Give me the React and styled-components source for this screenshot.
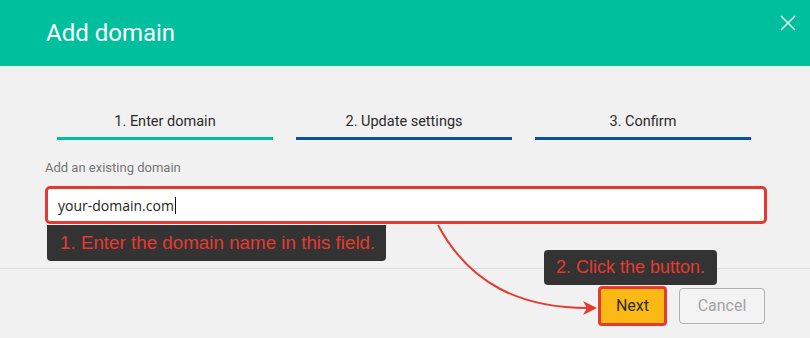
import React from "react";
import styled, { createGlobalStyle } from "styled-components";

const GlobalStyle = createGlobalStyle`
    html, body {
        margin: 0;
        padding: 0;
        background: #f1f1f1;
    }
`;

const RED = "#e43a2f";

const Modal = styled.div`
    position: relative;
    width: 810px;
    height: 338px;
    background: #f1f1f1;
    overflow: hidden;
    font-family: Roboto, "Liberation Sans", sans-serif;
`;

const Header = styled.header`
    height: 66px;
    background: #00bf9c;
    display: flex;
    align-items: center;
    justify-content: space-between;
    padding: 0 14px 0 46px;
    box-sizing: border-box;
`;

const Title = styled.h1`
    margin: 0 0 1px;
    font-size: 24px;
    font-weight: 400;
    color: #fff;
`;

const CloseButton = styled.button`
    align-self: flex-start;
    margin-top: 15px;
    width: 16px;
    height: 16px;
    padding: 0;
    border: 0;
    background: none;
    cursor: pointer;
    display: flex;
`;

const Body = styled.div`
    position: relative;
    padding: 46px 43px 44px 45px;
`;

const Steps = styled.div`
    display: grid;
    grid-template-columns: repeat(3, 1fr);
    gap: 23px;
    margin: 0 16px 0 12px;
`;

const Step = styled.div`
    text-align: center;
    font-size: 14.5px;
    line-height: 20px;
    color: #2b2b2b;
    padding-bottom: 5px;
    border-bottom: 3px solid ${p => (p.$active ? "#00bf9c" : "#0d4f9f")};
`;

const FieldLabel = styled.label`
    display: block;
    margin-top: 19px;
    font-size: 13px;
    line-height: 18px;
    color: #767676;
`;

const InputWrap = styled.div`
    position: relative;
    margin-top: 9px;
`;

const Input = styled.div`
    height: 38px;
    box-sizing: border-box;
    border: 3px solid ${RED};
    border-radius: 5px;
    background: #fff;
    display: flex;
    align-items: center;
    padding-left: 10px;
    font-family: "Open Sans", sans-serif;
    font-size: 14px;
    color: #1e1e1e;
`;

const Caret = styled.span`
    display: inline-block;
    width: 1px;
    height: 17px;
    background: #111;
    margin-left: 1px;
`;

const Hint = styled.div`
    position: absolute;
    background: #333;
    color: ${RED};
    font-family: "Liberation Sans", Arial, sans-serif;
    font-size: ${p => p.$size || 18}px;
    white-space: nowrap;
    display: flex;
    align-items: center;
    box-sizing: border-box;
`;

const FieldHint = styled(Hint)`
    left: 2px;
    top: 100%;
    margin-top: 1px;
    width: 339px;
    height: 36px;
    padding-left: 13px;
    border-radius: 0 0 4px 4px;
`;

const ButtonHint = styled(Hint)`
    left: 544px;
    top: 250px;
    width: 173px;
    height: 35px;
    padding-left: 12px;
    border-radius: 4px;
`;

const Footer = styled.footer`
    border-top: 1px solid #dedbe4;
    height: 70px;
    box-sizing: border-box;
    display: flex;
    justify-content: flex-end;
    align-items: center;
    gap: 12px;
    padding: 0 45px 0 0;
`;

const Button = styled.button`
    font-family: Roboto, "Liberation Sans", sans-serif;
    font-size: 16px;
    border-radius: 4px;
    box-sizing: border-box;
    cursor: pointer;
    padding: 0;
    margin-top: 4px;
`;

const NextButton = styled(Button)`
    width: 69px;
    height: 40px;
    background: #fdb913;
    border: 3px solid ${RED};
    color: #2d2d2d;
`;

const CancelButton = styled(Button)`
    width: 86px;
    height: 36px;
    background: #f3f3f3;
    border: 1px solid #b0b0b0;
    color: #a3a3a3;
`;

const ArrowLayer = styled.svg`
    position: absolute;
    left: 0;
    top: 0;
    pointer-events: none;
`;

const App = () => (
    <>
        <GlobalStyle/>
        <Modal>
            <Header>
                <Title>Add domain</Title>
                <CloseButton aria-label="Close">
                    <svg width="16" height="16" viewBox="0 0 16 16">
                        <path d="M1 1 L15 15 M15 1 L1 15" stroke="#fff" strokeWidth="1.4"/>
                    </svg>
                </CloseButton>
            </Header>
            <Body>
                <Steps>
                    <Step $active>1. Enter domain</Step>
                    <Step>2. Update settings</Step>
                    <Step>3. Confirm</Step>
                </Steps>
                <FieldLabel>Add an existing domain</FieldLabel>
                <InputWrap>
                    <Input>your-domain.com<Caret/></Input>
                    <FieldHint $size={18.8}>1. Enter the domain name in this field.</FieldHint>
                </InputWrap>
            </Body>
            <Footer>
                <NextButton>Next</NextButton>
                <CancelButton>Cancel</CancelButton>
            </Footer>
            <ArrowLayer width="810" height="338" viewBox="0 0 810 338">
                <path d="M438 225 C470 285 522 308 588 308" fill="none" stroke={RED} strokeWidth="2"/>
                <path d="M597 308 L583 301 L587 308 L583 315 Z" fill={RED}/>
            </ArrowLayer>
            <ButtonHint>2. Click the button.</ButtonHint>
        </Modal>
    </>
);

export default App;
